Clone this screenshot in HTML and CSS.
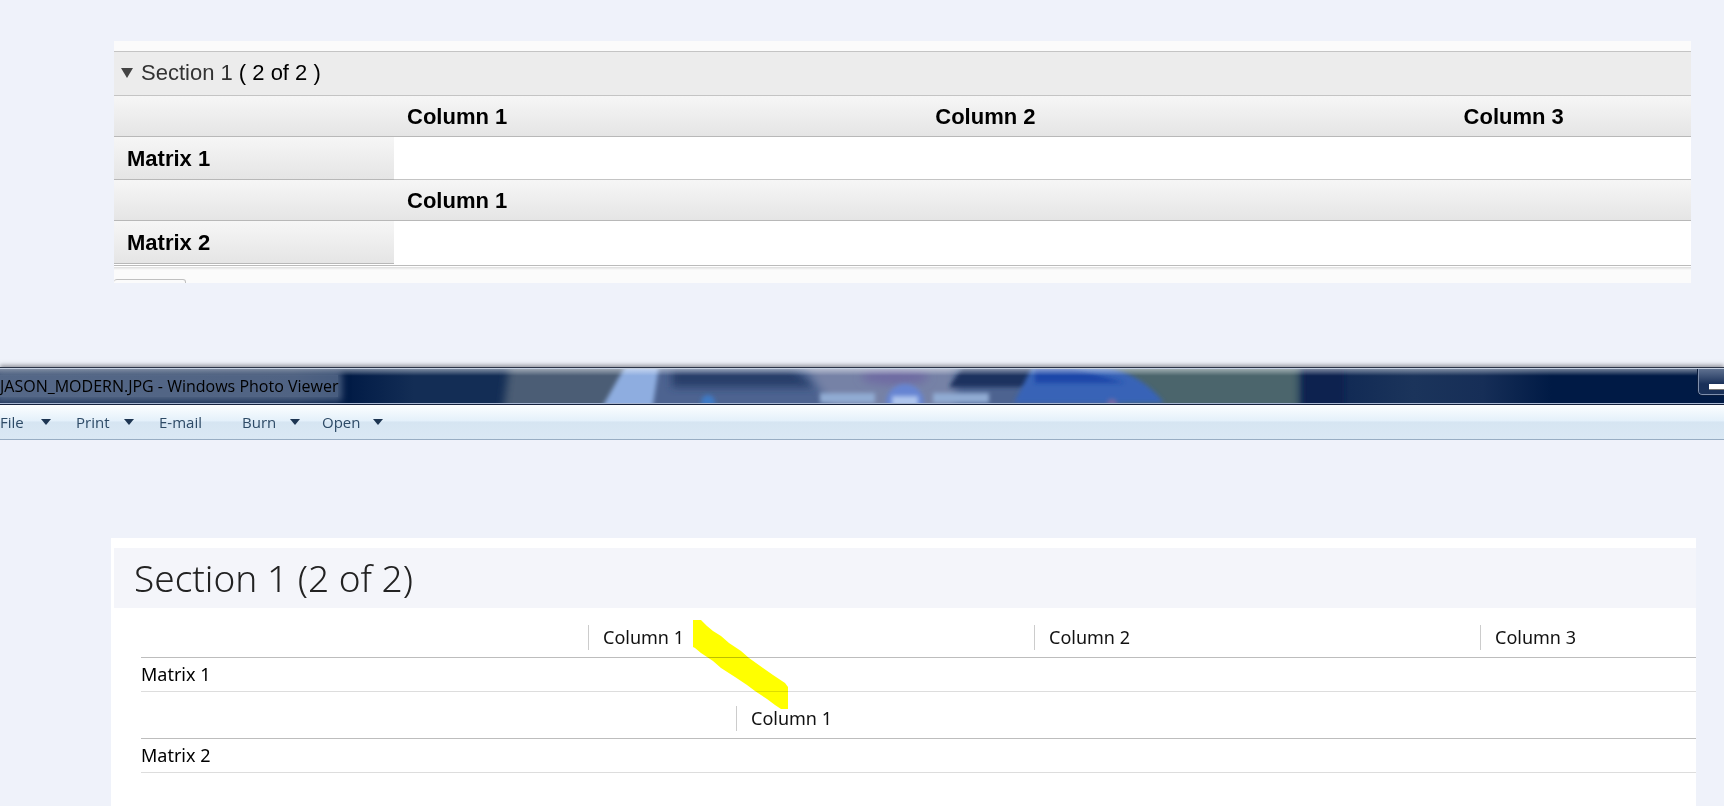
FILE: index.html
```html
<!DOCTYPE html>
<html lang="en">
<head>
    <meta charset="UTF-8">
    <meta name="viewport" content="width=device-width, initial-scale=1.0">
    <title>JASON_MODERN.JPG - Windows Photo Viewer</title>
    <link rel="stylesheet" href="styles.css">
</head>

<body>
    <section class="classic">
        <button class="section-toggle" type="button">
            <svg class="triangle" viewBox="0 0 12 10"><path d="M0 0h12L6 10z"/></svg>
            <span>Section 1 <span class="count">( 2 of 2 )</span></span>
        </button>

        <table class="classic-table">
            <colgroup>
                <col class="col-head"><col class="col-wide"><col class="col-wide"><col>
            </colgroup>
            <tr class="head-row">
                <th></th>
                <th>Column 1</th>
                <th>Column 2</th>
                <th>Column 3</th>
            </tr>
            <tr class="data-row">
                <th>Matrix 1</th>
                <td colspan="3"></td>
            </tr>
            <tr class="head-row">
                <th></th>
                <th colspan="3">Column 1</th>
            </tr>
            <tr class="data-row">
                <th>Matrix 2</th>
                <td colspan="3"></td>
            </tr>
        </table>

        <div class="classic-footer">
            <div class="tab-edge"></div>
        </div>
    </section>

    <section class="viewer">
        <header class="titlebar">
            <!-- blurred desktop showing through the glass -->
            <svg class="glass" viewBox="0 0 1724 34" preserveAspectRatio="none">
                <defs>
                    <filter id="soft" x="-30%" y="-50%" width="160%" height="200%"><feGaussianBlur stdDeviation="4"/></filter>
                    <filter id="fine" x="-30%" y="-50%" width="160%" height="200%"><feGaussianBlur stdDeviation="2"/></filter>
                    <linearGradient id="base">
                        <stop offset="0" stop-color="#1c3257"/>
                        <stop offset="0.17" stop-color="#13294f"/>
                        <stop offset="0.2" stop-color="#001a45"/>
                        <stop offset="0.24" stop-color="#132d55"/>
                        <stop offset="0.29" stop-color="#132d55"/>
                        <stop offset="0.75" stop-color="#0a2350"/>
                        <stop offset="0.82" stop-color="#1b345b"/>
                        <stop offset="0.86" stop-color="#162e57"/>
                        <stop offset="0.9" stop-color="#001a45"/>
                        <stop offset="1" stop-color="#001a45"/>
                    </linearGradient>
                    <linearGradient id="shine" x2="0" y2="1">
                        <stop offset="0" stop-color="#fff" stop-opacity="0.45"/>
                        <stop offset="0.2" stop-color="#fff" stop-opacity="0"/>
                    </linearGradient>
                </defs>
                <rect width="1724" height="34" fill="url(#base)"/>
                <path d="M510-10h130v60H502z" fill="#4c5d75" filter="url(#soft)"/>
                <path d="M655-10h600v60H640z" fill="#4d6390" filter="url(#soft)"/>
                <path d="M672 0h120l24 18H672z" fill="#283e69" filter="url(#soft)"/>
                <path d="M800-10h155v60H840z" fill="#7682a6" filter="url(#soft)"/>
                <ellipse cx="895" cy="8" rx="34" ry="8" fill="#706ca3" filter="url(#soft)"/>
                <path d="M628-8h32l-8 50h-52z" fill="#8eade0" filter="url(#fine)"/>
                <path d="M963-2h80l-10 20h-84z" fill="#1b315e" filter="url(#fine)"/>
                <path d="M1100-10h200v60h-170z" fill="#4b656c" filter="url(#soft)"/>
                <path d="M1036-10h30c50 4 80 20 98 44h-150l10-20z" fill="#3764b7" filter="url(#fine)"/>
                <path d="M1035-2h35l55 16h-90z" fill="#1b47a9" filter="url(#fine)"/>
                <path d="M820 24h55v10h-55zM933 24h56v10h-56z" fill="#91abd3" filter="url(#fine)"/>
                <circle cx="905" cy="34" r="19" fill="#6684d2" filter="url(#fine)"/>
                <path d="M892 27h26v10h-26z" fill="#aec5ed" filter="url(#fine)"/>
                <circle cx="708" cy="33" r="7" fill="#3d79c5" filter="url(#fine)"/>
                <circle cx="1112" cy="35" r="5" fill="#7869a4" filter="url(#fine)"/>
                <path d="M1304-10h40v60h-40z" fill="#0a2350" filter="url(#fine)"/>
                <rect width="1724" height="34" fill="url(#shine)"/>
            </svg>
            <span class="window-title">JASON_MODERN.JPG - Windows Photo Viewer</span>
            <button class="minimize" type="button" aria-label="Minimize"></button>
        </header>

        <nav class="toolbar">
            <button class="tool" type="button">File <svg class="arrow" viewBox="0 0 10 6"><path d="M0 0h10L5 6z"/></svg></button>
            <button class="tool" type="button">Print <svg class="arrow" viewBox="0 0 10 6"><path d="M0 0h10L5 6z"/></svg></button>
            <button class="tool" type="button">E-mail</button>
            <button class="tool" type="button">Burn <svg class="arrow" viewBox="0 0 10 6"><path d="M0 0h10L5 6z"/></svg></button>
            <button class="tool" type="button">Open <svg class="arrow" viewBox="0 0 10 6"><path d="M0 0h10L5 6z"/></svg></button>
        </nav>
    </section>

    <section class="modern">
        <h1>Section 1 (2 of 2)</h1>

        <table class="modern-table">
            <colgroup>
                <col class="first"><col class="third"><col class="third"><col>
            </colgroup>
            <tr>
                <th></th>
                <th><span>Column 1</span></th>
                <th><span>Column 2</span></th>
                <th><span>Column 3</span></th>
            </tr>
            <tr>
                <td colspan="4">Matrix 1</td>
            </tr>
        </table>

        <table class="modern-table">
            <colgroup>
                <col class="wide"><col>
            </colgroup>
            <tr>
                <th></th>
                <th><span>Column 1</span></th>
            </tr>
            <tr>
                <td colspan="2">Matrix 2</td>
            </tr>
        </table>

        <svg class="marker" viewBox="0 0 96 90"><path d="M0 0h8l6 6 6 5 8 5 8 7 12 8 8 7 14 10 10 7 12 8 3 4v22h-7l-6-4-8-6-12-8-8-6-12-8-14-9-8-7-12-8-6-5-4-2z"/></svg>
    </section>
</body>
</html>
```
FILE: styles.css
```css
* {
    box-sizing: border-box;
}

body {
    margin: 0;
    min-height: 100vh;
    display: flex;
    flex-direction: column;
    background: #eff2fa;
    color: #000;
    overflow-x: hidden;
}

button {
    border: none;
    background: none;
    padding: 0;
    cursor: pointer;
}

table {
    width: 100%;
    table-layout: fixed;
    border-collapse: separate;
    border-spacing: 0;
}

th, td {
    text-align: left;
    padding: 0;
}

/* classic layout */
.classic {
    margin: 41px 33px 0 114px;
    padding-top: 10px;
    background: #fbfbfb;
    font-family: "Liberation Sans", Arial, sans-serif;
    font-size: 22px;
}

.section-toggle {
    display: flex;
    align-items: center;
    gap: 8px;
    width: 100%;
    height: 45px;
    padding: 0 0 2px 7px;
    border-top: 1px solid #c4c4c4;
    border-bottom: 1px solid #c4c4c4;
    background: #ececec;
    font: inherit;
    color: #333;
}

.triangle {
    width: 12px;
    height: 10px;
    fill: #444;
}

.count {
    color: #000;
}

.col-head {
    width: 280px;
}

.col-wide {
    width: 33.5%;
}

.classic-table th {
    height: 41px;
    padding: 2px 0 0 13px;
    border-bottom: 1px solid #b8b8b8;
    background: linear-gradient(#f6f6f6, #e5e5e5);
}

.classic-table .data-row th {
    height: 43px;
}

.classic-table td {
    background: #fff;
    border-bottom: 1px solid #c4c4c4;
}

.classic-table tr:last-child td {
    border-bottom: none;
}

.classic-footer {
    height: 19px;
    padding-top: 14px;
    border-top: 1px solid #fff;
    background: linear-gradient(#bbb 1px, #fff 1px, #fff 2px, #ddd 2px, #fbfbfb 5px);
    overflow: hidden;
}

.tab-edge {
    width: 72px;
    height: 10px;
    border: 1px solid #c0c0c0;
    border-left: none;
    border-radius: 3px;
}

/* photo viewer window */
.viewer {
    margin-top: 84px;
    border-top: 1px solid #2b3448;
    box-shadow: 0 -2px 4px rgba(60, 60, 70, 0.5);
    clip-path: inset(-8px 0 0 0); /* shadow only above the window */
    font-family: "Open Sans", "Noto Sans", sans-serif;
    font-size: 15px;
}

.titlebar {
    position: relative;
    display: flex;
    justify-content: space-between;
    height: 36px;
    border-top: 1px solid #c5d0e2;
    border-bottom: 1px solid #a8b7d2;
    overflow: hidden;
}

.glass {
    position: absolute;
    inset: 0;
    width: 100%;
    height: 100%;
}

.window-title {
    position: relative;
    margin: 6px 0;
    font-size: 16px;
    line-height: 22px;
    background: rgba(142, 157, 184, 0.5);
    box-shadow: 0 0 7px 4px rgba(142, 157, 184, 0.5);
}

.minimize {
    position: relative;
    width: 26px;
    height: 26px;
    border: 1px solid #7f90ae;
    border-width: 0 0 1px 1px;
    border-radius: 0 0 0 4px;
    background: linear-gradient(#5f7190, #1a315a 60%);
    outline: 1px solid #0a1c3d;
}

.minimize::before {
    content: "";
    position: absolute;
    right: 0;
    top: 15px;
    width: 15px;
    height: 5px;
    background: #fff;
    border-bottom: 1px solid #777;
}

.toolbar {
    display: flex;
    gap: 22px;
    height: 36px;
    padding-bottom: 1px;
    border-top: 1px solid #14213d;
    border-bottom: 1px solid #98adc3;
    background: linear-gradient(#fcfeff, #e3f0fa 48%, #d6e5f2 49%, #dae8f4);
}

.tool {
    display: flex;
    align-items: center;
    justify-content: space-between;
    min-width: 61px;
    padding-left: 3px;
    font: inherit;
    color: #2d4a66;
}

.tool:first-child {
    min-width: 51px;
    padding-left: 0;
}

.tool:last-child {
    padding-left: 0;
}

.arrow {
    width: 10px;
    height: 6px;
    fill: #1d3552;
}

/* modern layout */
.modern {
    position: relative;
    flex: 1;
    margin: 98px 28px 0 111px;
    padding: 10px 0 0 3px;
    background: #fff;
    font-family: "Noto Sans", sans-serif;
    font-size: 18px;
}

.modern h1 {
    margin: 0 0 3px;
    padding-left: 20px;
    background: #f4f5fa;
    color: #222;
    font-size: 37px;
    font-weight: 300;
    line-height: 60px;
}

.modern-table {
    width: calc(100% - 27px);
    margin-left: 27px;
}

.first {
    width: 447px;
}

.third {
    width: 446px;
}

.wide {
    width: 595px;
}

.modern-table th {
    height: 47px;
    border-bottom: 1px solid #bdbdbd;
    padding-top: 7px;
    font-weight: 400;
    color: #111;
}

.modern-table th span {
    display: block;
    padding-left: 14px;
    border-left: 1px solid #ccc;
    line-height: 25px;
}

.modern-table td {
    height: 34px;
    padding-bottom: 2px;
    border-bottom: 1px solid #ddd;
    line-height: 24px;
}

.marker {
    position: absolute;
    top: 82px;
    left: 582px;
    width: 96px;
    height: 90px;
    fill: #ff0;
    mix-blend-mode: multiply;
}
```
